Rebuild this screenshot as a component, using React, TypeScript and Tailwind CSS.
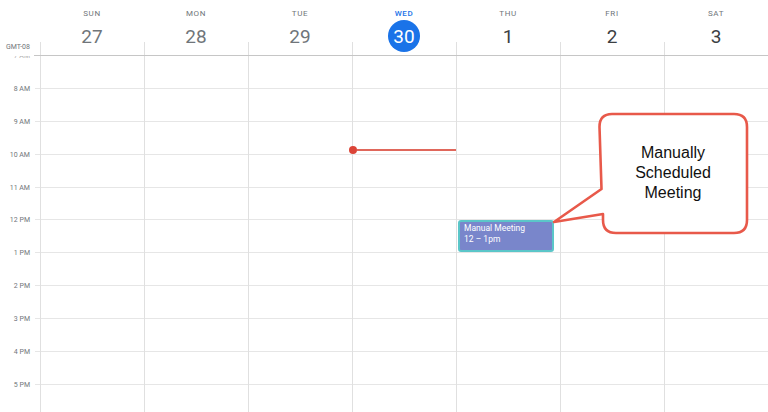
import React from "react";

const days = [
  { name: "SUN", num: "27", past: true },
  { name: "MON", num: "28", past: true },
  { name: "TUE", num: "29", past: true },
  { name: "WED", num: "30", today: true },
  { name: "THU", num: "1" },
  { name: "FRI", num: "2" },
  { name: "SAT", num: "3" },
];

const hours = ["8 AM", "9 AM", "10 AM", "11 AM", "12 PM", "1 PM", "2 PM", "3 PM", "4 PM", "5 PM", ""];

export default function App() {
  return (
    <div className="relative w-[768px] h-[412px] overflow-hidden bg-white font-['Roboto','Liberation_Sans',sans-serif]">
      {/* Header */}
      <div className="flex h-[56px]">
        <div className="w-[40px] shrink-0 flex flex-col justify-end">
          <div className="text-[7px] leading-none text-[#70757a] pl-[6px] mb-[4px]">GMT-08</div>
          <div className="ml-[34px] h-px bg-[#c6c6c6]" />
        </div>
        <div className="flex-1 grid grid-cols-7 border-b border-[#c6c6c6]">
          {days.map((d) => (
            <div
              key={d.name}
              className="flex flex-col items-center pt-[10px] bg-[linear-gradient(#e0e0e0,#e0e0e0)] bg-no-repeat bg-[length:1px_13px] bg-left-bottom"
            >
              <div
                className={
                  "text-[8px] leading-[8px] tracking-[0.6px] " +
                  (d.today ? "text-[#1a73e8] font-medium" : "text-[#70757a]")
                }
              >
                {d.name}
              </div>
              <div
                className={
                  "mt-[2px] w-[32px] h-[32px] rounded-full flex items-center justify-center text-[19px] leading-none " +
                  (d.today
                    ? "bg-[#1a73e8] text-white"
                    : d.past
                    ? "text-[#70757a]"
                    : "text-[#3c4043]")
                }
              >
                {d.num}
              </div>
            </div>
          ))}
        </div>
      </div>

      {/* Body */}
      <div className="flex h-[356px] overflow-hidden">
        <div className="w-[40px] shrink-0 flex flex-col">
          {hours.map((h, i) => (
            <div key={i} className="relative h-[32.9px] shrink-0 flex items-end justify-end">
              {i === 0 && (
                <span className="absolute right-[10px] top-0 -translate-y-1/2 text-[7px] leading-none text-[#b0b0b0]">
                  7 AM
                </span>
              )}
              {h && (
                <span className="translate-y-1/2 text-[7px] leading-none text-[#70757a] mr-[5px]">{h}</span>
              )}
              <div className="w-[5px] h-px bg-[#e6e6e6]" />
            </div>
          ))}
        </div>
        <div className="flex-1 grid grid-cols-7">
          {days.map((d) => (
            <div key={d.name} className="relative flex flex-col border-l border-[#e0e0e0]">
              {hours.map((h, i) => (
                <div key={i} className="h-[32.9px] shrink-0 border-b border-[#e6e6e6]" />
              ))}
              {d.today && (
                <div className="absolute left-0 right-0 top-[90px] flex items-center">
                  <div className="w-[8px] h-[8px] rounded-full bg-[#db4437] -ml-[4px] shrink-0" />
                  <div className="flex-1 h-[2px] bg-[#e0675b]" />
                </div>
              )}
              {d.name === "THU" && (
                <div className="absolute left-[1px] top-[164px] w-[96px] h-[32px] rounded-[3px] bg-[#7986cb] border-2 border-[#5bc6c9] px-[4px] pt-[1px] text-white text-[8.5px] leading-[11px]">
                  <div>Manual Meeting</div>
                  <div>12 – 1pm</div>
                </div>
              )}
            </div>
          ))}
        </div>
      </div>

      {/* Callout */}
      <svg
        className="absolute left-[548px] top-[108px]"
        width="206"
        height="130"
        viewBox="0 0 206 130"
      >
        <path
          d="M 64,6 L 186,6 Q 199,6 199,19 L 199,112 Q 199,125 186,125 L 68,125 Q 55,125 55,112 L 55,106 L 6,114 L 53.5,81 L 51.5,19 Q 51.5,6 64,6 Z"
          fill="white"
          stroke="#e8594a"
          strokeWidth="2.6"
          strokeLinejoin="round"
        />
      </svg>
      <div className="absolute left-[599px] top-[143px] w-[148px] text-center text-[16px] leading-[20px] text-[#111] font-['Liberation_Sans','Arial',sans-serif]">
        <div>Manually</div>
        <div>Scheduled</div>
        <div>Meeting</div>
      </div>
    </div>
  );
}
